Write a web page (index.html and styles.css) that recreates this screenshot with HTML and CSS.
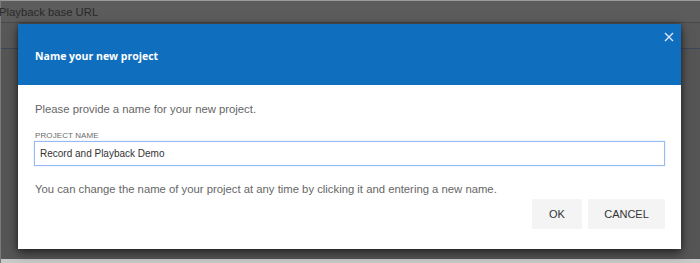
FILE: index.html
```html
<!DOCTYPE html>
<html>
<head>
<meta charset="utf-8">
<link rel="stylesheet" href="styles.css">
</head>
<body>
<div class="page">
  <div class="page-top"><span class="page-label">Playback base URL</span></div>
  <div class="page-band"></div>
  <div class="page-rest"></div>
  <div class="page-foot"></div>

  <div class="modal">
    <div class="modal-header">
      <h1 class="modal-title">Name your new project</h1>
      <button class="modal-close" aria-label="Close">
        <svg width="10" height="10" viewBox="0 0 10 10"><path d="M1 1 L9 9 M9 1 L1 9" stroke="#dce8f6" stroke-width="1.4" fill="none"/></svg>
      </button>
    </div>
    <div class="modal-body">
      <p class="intro">Please provide a name for your new project.</p>
      <label class="field-label">PROJECT NAME</label>
      <div class="field-input">Record and Playback Demo</div>
      <p class="hint">You can change the name of your project at any time by clicking it and entering a new name.</p>
      <div class="actions">
        <button class="btn btn-ok">OK</button>
        <button class="btn btn-cancel">CANCEL</button>
      </div>
    </div>
  </div>
</div>
</body>
</html>
```
FILE: styles.css
```css
html, body {
  margin: 0;
  padding: 0;
}
body {
  width: 700px;
  height: 263px;
  overflow: hidden;
  background: #565656;
  font-family: "Liberation Sans", Arial, sans-serif;
}
.page {
  position: relative;
  width: 700px;
  height: 263px;
  display: flex;
  flex-direction: column;
  border-top: 1px solid #9a9a9a;
  border-left: 1px solid #7a7a7a;
  box-sizing: border-box;
}
.page-top {
  height: 21px;
  background: #5c5c5c;
  border-bottom: 1px solid #484848;
  display: flex;
  align-items: center;
}
.page-label {
  margin-left: -2px;
  font-size: 11.3px;
  color: #2a2a2a;
}
.page-band {
  height: 25px;
  background: #585858;
  border-bottom: 1px solid #3c4759;
}
.page-rest {
  flex: 1;
  background: #555555;
}
.page-foot {
  height: 4px;
  background: #c9c9c9;
}
.modal {
  position: absolute;
  left: 17px;
  top: 23px;
  width: 663px;
  background: #ffffff;
  box-shadow: 0 4px 10px rgba(0, 0, 0, 0.55), 0 0 4px rgba(0, 0, 0, 0.35);
}
.modal-header {
  position: relative;
  height: 61px;
  background: #106ebe;
  display: flex;
  align-items: center;
  padding-left: 17px;
}
.modal-title {
  margin: 0;
  font-family: "Open Sans", "Noto Sans", sans-serif;
  font-weight: 700;
  font-size: 10.5px;
  color: #ffffff;
  margin-top: 2px;
}
.modal-close {
  position: absolute;
  right: 5px;
  top: 6px;
  width: 14px;
  height: 14px;
  padding: 0;
  border: 0;
  background: transparent;
  display: flex;
  align-items: center;
  justify-content: center;
}
.modal-body {
  padding: 16px 16px 20px 17px;
  display: flex;
  flex-direction: column;
}
.intro, .hint {
  margin: 0;
  font-size: 11.3px;
  line-height: 16px;
  color: #666666;
}
.field-label {
  margin-top: 14px;
  font-size: 8px;
  line-height: 10px;
  color: #6b6b6b;
  letter-spacing: 0.1px;
}
.field-input {
  height: 25px;
  box-sizing: border-box;
  border: 1px solid #99bbf4;
  box-shadow: 0 0 1px #a9c7f7;
  padding-left: 5px;
  margin-left: -1px;
  display: flex;
  align-items: center;
  font-size: 10px;
  color: #333333;
}
.hint {
  margin-top: 15px;
}
.actions {
  margin-top: 2px;
  display: flex;
  justify-content: flex-end;
  gap: 6px;
}
.btn {
  height: 30px;
  border: 0;
  border-radius: 2px;
  background: #f4f4f4;
  font-family: "Liberation Sans", Arial, sans-serif;
  font-size: 11px;
  color: #333333;
  padding: 0;
}
.btn-ok {
  width: 50px;
}
.btn-cancel {
  width: 77px;
}
```
